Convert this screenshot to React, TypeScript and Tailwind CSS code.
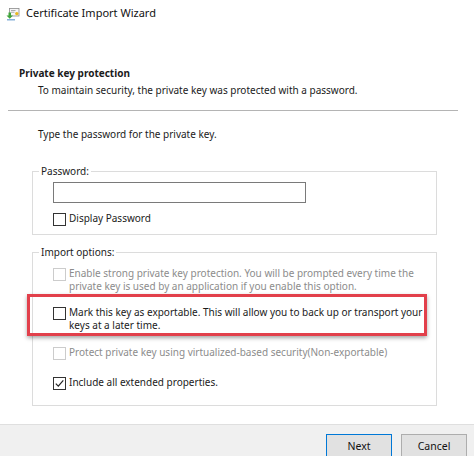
import React from 'react';

const font = { fontFamily: '"Noto Sans", "Open Sans", sans-serif' };

const CertIcon = () => (
  <svg width="14" height="14" viewBox="0 0 14 14">
    <rect x="3.5" y="1.5" width="9.5" height="7.5" fill="#f6f6f6" stroke="#8a8a8a" strokeWidth="0.8" />
    <rect x="5" y="3" width="4.5" height="0.8" fill="#9a9a9a" />
    <rect x="5" y="4.8" width="3.5" height="0.8" fill="#9a9a9a" />
    <circle cx="10.8" cy="6.6" r="1.7" fill="#e8b820" />
    <path d="M2.5 5.5 h2.5 v3 h2 l-3.25 3.3 L0.5 8.5 h2 z" fill="#3fa33a" />
    <rect x="1" y="12.2" width="8" height="1.2" fill="#6a9fd0" />
  </svg>
);

const Box = ({ checked = false, disabled = false }: { checked?: boolean; disabled?: boolean }) => (
  <span
    className={`mt-[1px] flex h-[13px] w-[13px] shrink-0 items-center justify-center border bg-white ${
      disabled ? 'border-[#cccccc]' : 'border-[#333333]'
    }`}
  >
    {checked && (
      <svg width="11" height="11" viewBox="0 0 11 11">
        <path d="M1.8 5.6 L4.3 8.1 L9.3 2.4" fill="none" stroke="#222" strokeWidth="1.2" />
      </svg>
    )}
  </span>
);

const Option = ({
  children,
  checked,
  disabled,
}: {
  children: React.ReactNode;
  checked?: boolean;
  disabled?: boolean;
}) => (
  <div className="flex items-start gap-[3px]">
    <Box checked={checked} disabled={disabled} />
    <span className={`leading-[13px] ${disabled ? 'text-[#8c8c8c]' : 'text-[#1b1b1b]'}`}>{children}</span>
  </div>
);

export default function App() {
  return (
    <div className="flex h-[456px] w-[474px] flex-col overflow-hidden bg-white text-[10px] text-[#1b1b1b]" style={font}>
      {/* title bar */}
      <div className="flex h-[27px] items-center gap-[6px] pl-[6px]">
        <CertIcon />
        <span className="text-[11px] text-[#111]">Certificate Import Wizard</span>
      </div>

      {/* header */}
      <div className="ml-[8px] mr-[16px] border-b border-[#b4b4b4] pb-[13px] pt-[39px]">
        <div className="pl-[11px] font-bold leading-[14px]">Private key protection</div>
        <div className="mt-[3px] pl-[30px] leading-[14px]">
          To maintain security, the private key was protected with a password.
        </div>
      </div>

      {/* body */}
      <div className="flex flex-col pl-[32px] pr-[37px]">
        <div className="mt-[16px] pl-[6px] leading-[14px]">Type the password for the private key.</div>

        <fieldset className="mt-[24px] h-[70px] border border-[#dcdcdc]">
          <legend className="ml-[6px] px-[2px] leading-[12px]">Password:</legend>
          <div className="pl-[20px]">
            <div className="mt-[5px] h-[21px] w-[253px] border border-[#7a7a7a] bg-white" />
            <div className="mt-[9px]">
              <Option>Display Password</Option>
            </div>
          </div>
        </fieldset>

        <fieldset className="mt-[11px] h-[160px] border border-[#dcdcdc]">
          <legend className="ml-[6px] px-[2px] leading-[12px]">Import options:</legend>
          <div className="pl-[20px] pr-[6px]">
            <div className="mt-[9px]">
              <Option disabled>
                Enable strong private key protection. You will be prompted every time the private key is used by an
                application if you enable this option.
              </Option>
            </div>
            <div className="relative mt-[13px]">
              <div className="pointer-events-none absolute -left-[26px] -top-[12px] h-[42px] w-[400px] border-[3px] border-[#e2404b] shadow-[0_2px_4px_rgba(0,0,0,0.35)]" />
              <Option>
                Mark this key as exportable. This will allow you to back up or transport your keys at a later time.
              </Option>
            </div>
            <div className="mt-[14px]">
              <Option disabled>Protect private key using virtualized-based security(Non-exportable)</Option>
            </div>
            <div className="mt-[16px]">
              <Option checked>Include all extended properties.</Option>
            </div>
          </div>
        </fieldset>
      </div>

      {/* footer */}
      <div className="mt-auto flex h-[32px] justify-end gap-[9px] border-t border-[#dfdfdf] bg-[#f0f0f0] pr-[7px] pt-[9px]">
        <button className="h-[26px] w-[66px] border border-[#0078d7] bg-[#e1e1e1] text-[10.5px] text-[#111]">
          Next
        </button>
        <button className="h-[26px] w-[66px] border border-[#adadad] bg-[#e1e1e1] text-[10.5px] text-[#111]">
          Cancel
        </button>
      </div>
    </div>
  );
}
